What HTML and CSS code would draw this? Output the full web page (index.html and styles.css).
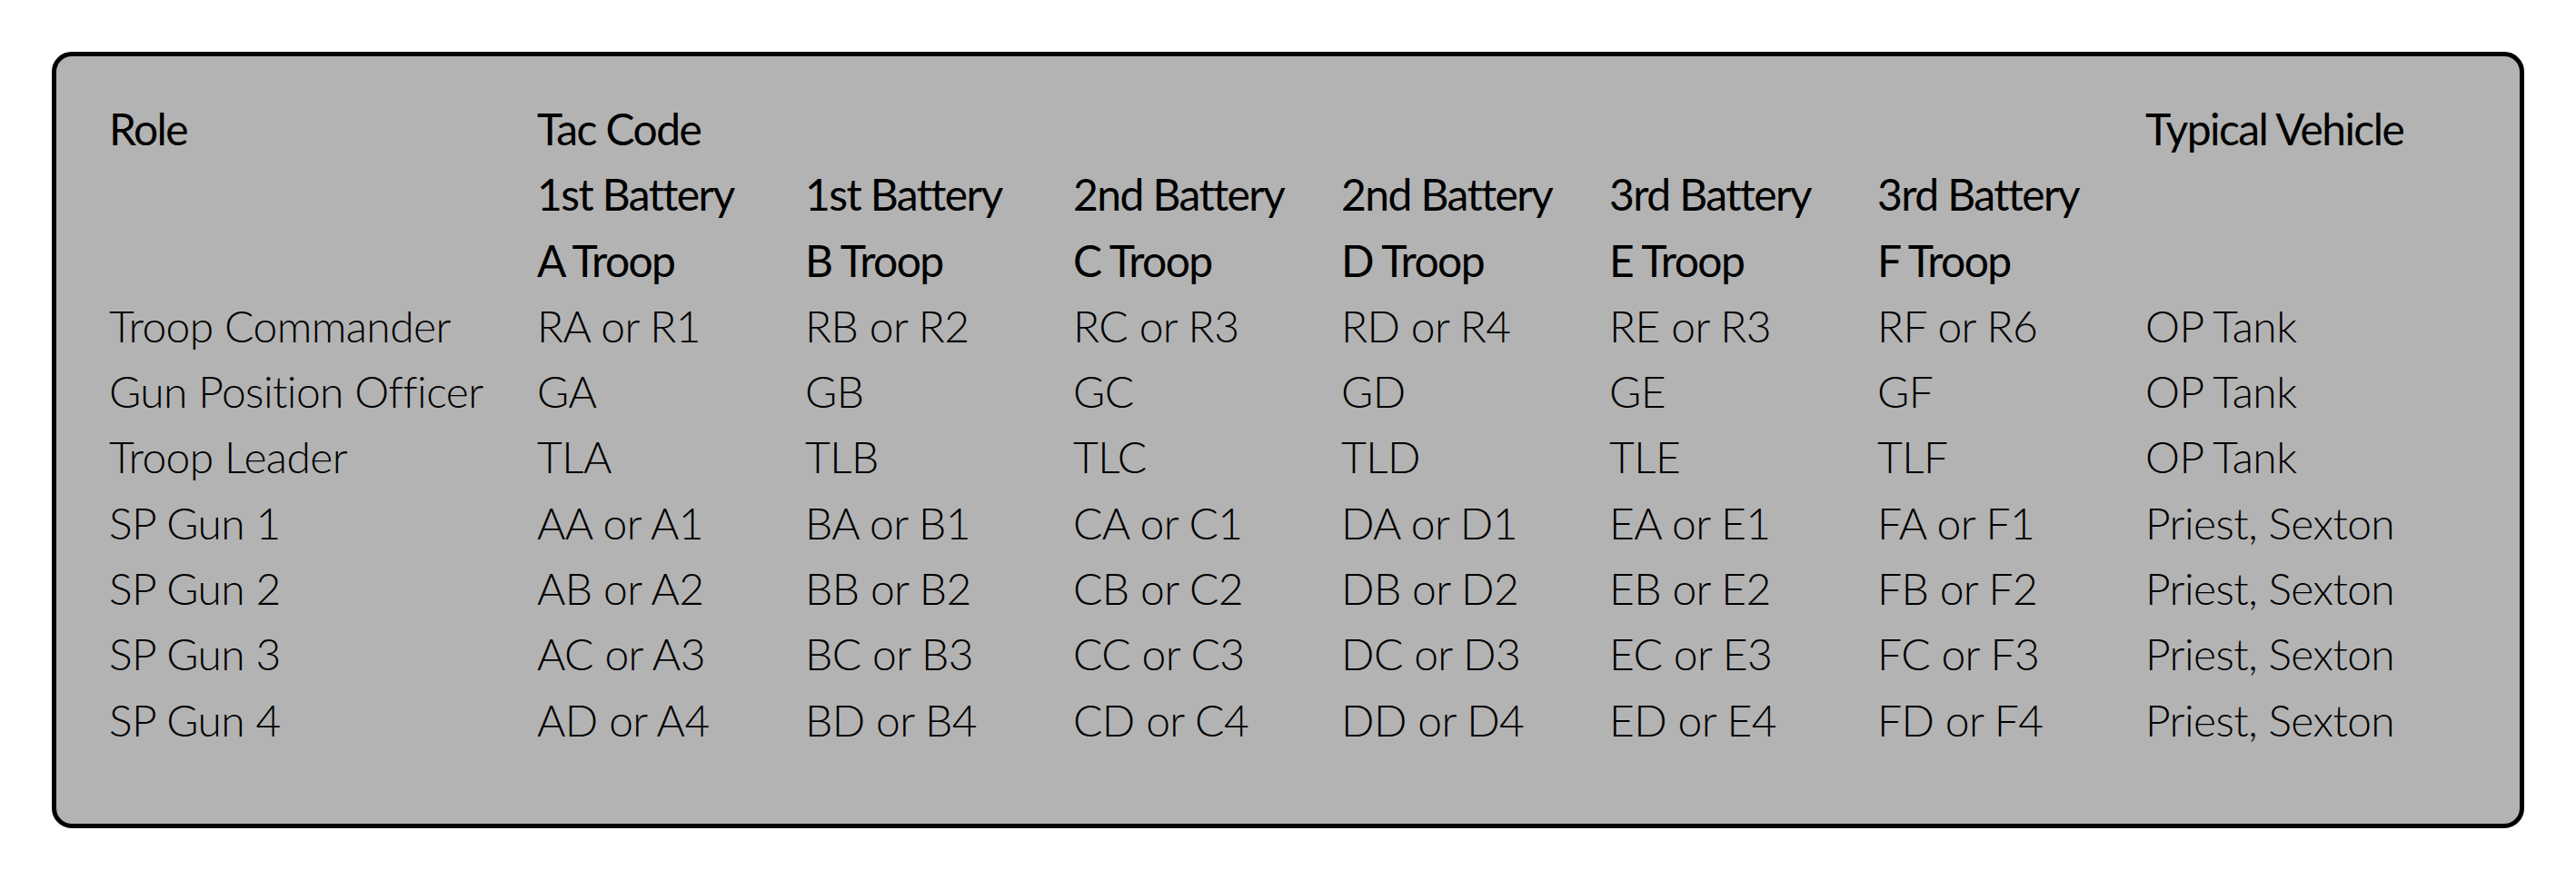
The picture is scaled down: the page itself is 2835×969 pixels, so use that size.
FILE: index.html
```html
<!DOCTYPE html>
<html lang="en">
<head>
<meta charset="utf-8">
<title>Tac Codes</title>
<link rel="stylesheet" href="styles.css">
</head>
<body>
<div class="page">
  <div class="panel">
    <div class="grid">
      <div class="h">Role</div>
      <div class="h">Tac Code</div>
      <div></div><div></div><div></div><div></div><div></div>
      <div class="h">Typical Vehicle</div>

      <div></div>
      <div class="h sub">1st Battery</div>
      <div class="h sub">1st Battery</div>
      <div class="h sub">2nd Battery</div>
      <div class="h sub">2nd Battery</div>
      <div class="h sub">3rd Battery</div>
      <div class="h sub">3rd Battery</div>
      <div></div>

      <div></div>
      <div class="h sub">A Troop</div>
      <div class="h sub">B Troop</div>
      <div class="h sub">C Troop</div>
      <div class="h sub">D Troop</div>
      <div class="h sub">E Troop</div>
      <div class="h sub">F Troop</div>
      <div></div>

      <div>Troop Commander</div>
      <div>RA or R1</div><div>RB or R2</div><div>RC or R3</div><div>RD or R4</div><div>RE or R3</div><div>RF or R6</div>
      <div>OP Tank</div>

      <div>Gun Position Officer</div>
      <div>GA</div><div>GB</div><div>GC</div><div>GD</div><div>GE</div><div>GF</div>
      <div>OP Tank</div>

      <div>Troop Leader</div>
      <div>TLA</div><div>TLB</div><div>TLC</div><div>TLD</div><div>TLE</div><div>TLF</div>
      <div>OP Tank</div>

      <div>SP Gun 1</div>
      <div>AA or A1</div><div>BA or B1</div><div>CA or C1</div><div>DA or D1</div><div>EA or E1</div><div>FA or F1</div>
      <div>Priest, Sexton</div>

      <div>SP Gun 2</div>
      <div>AB or A2</div><div>BB or B2</div><div>CB or C2</div><div>DB or D2</div><div>EB or E2</div><div>FB or F2</div>
      <div>Priest, Sexton</div>

      <div>SP Gun 3</div>
      <div>AC or A3</div><div>BC or B3</div><div>CC or C3</div><div>DC or D3</div><div>EC or E3</div><div>FC or F3</div>
      <div>Priest, Sexton</div>

      <div>SP Gun 4</div>
      <div>AD or A4</div><div>BD or B4</div><div>CD or C4</div><div>DD or D4</div><div>ED or E4</div><div>FD or F4</div>
      <div>Priest, Sexton</div>
    </div>
  </div>
</div>
</body>
</html>
```

FILE: styles.css
```css
html, body {
  margin: 0;
  padding: 0;
  background: #ffffff;
}

.page {
  padding: 57px;
}

.panel {
  background: #b3b3b3;
  border: 5px solid #000000;
  border-radius: 22px;
  padding: 44px 0 78px 58px;
  color: #000000;
  font-family: "Lato", "Liberation Sans", sans-serif;
  font-weight: 300;
  font-size: 48px;
}

.grid {
  display: grid;
  grid-template-columns: 471px repeat(6, 295px) 1fr;
  grid-auto-rows: 72.3px;
  line-height: 72.3px;
  white-space: nowrap;
  letter-spacing: -0.6px;
}

.h {
  font-weight: 400;
  letter-spacing: -1.6px;
}
```
